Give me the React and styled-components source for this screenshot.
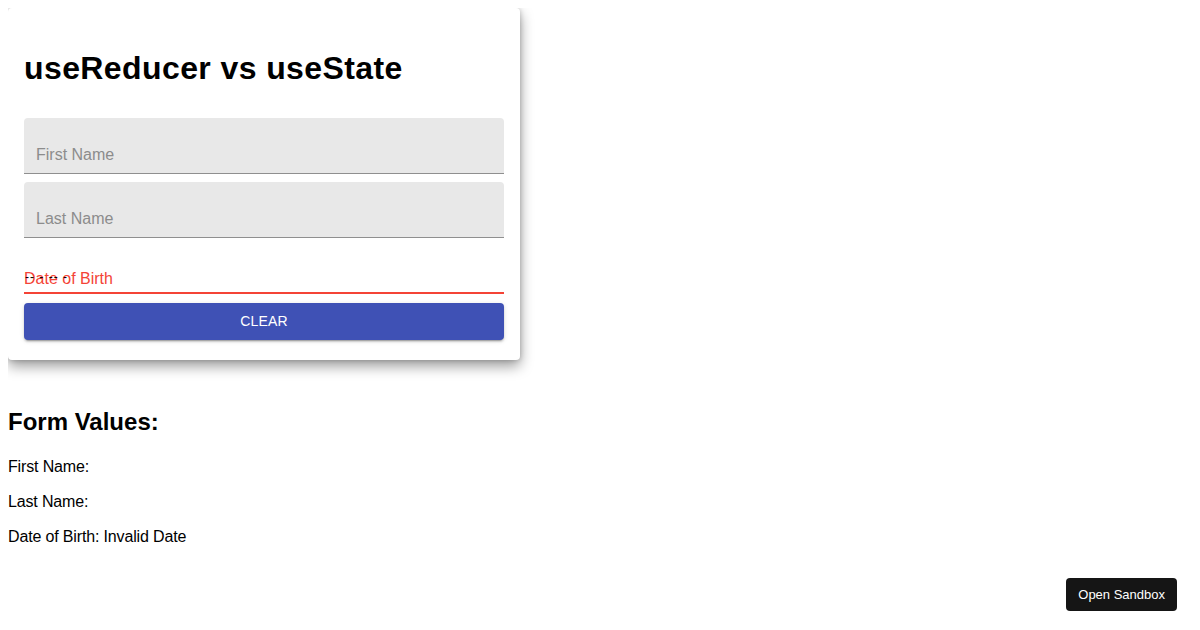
import React from "react";
import styled, { createGlobalStyle } from "styled-components";

const Global = createGlobalStyle`
  body {
    margin: 8px;
    font-family: "Liberation Sans", Arial, sans-serif;
    background: #fff;
    color: #000;
  }
`;

const Card = styled.div`
  width: 512px;
  box-sizing: border-box;
  padding: 16px 16px 20px;
  background: #fff;
  border-radius: 4px;
  box-shadow: 0 6px 14px rgba(0, 0, 0, 0.4), 0 0 5px rgba(0, 0, 0, 0.2);
  margin-bottom: 48px;
`;

const Title = styled.h1`
  font-size: 32px;
  font-weight: bold;
  letter-spacing: 0.4px;
  margin: 26px 0 31px;
`;

const Fields = styled.div`
  display: flex;
  flex-direction: column;
  gap: 8px;
`;

const FilledField = styled.div`
  height: 56px;
  box-sizing: border-box;
  background: #e8e8e8;
  border-radius: 4px 4px 0 0;
  border-bottom: 1px solid #8f8f8f;
  padding: 27px 12px 0;
  font-size: 16px;
  line-height: 19px;
  color: #8c8c8c;
`;

const DateField = styled.div`
  position: relative;
  height: 48px;
  box-sizing: border-box;
  padding-top: 23px;
  border-bottom: 2px solid #f44336;
  font-size: 16px;
  line-height: 19px;
  color: #f44336;
`;

const DatePlaceholder = styled.span`
  position: absolute;
  left: 1px;
  top: 22px;
  font-size: 12px;
  letter-spacing: 1px;
  color: #000;
`;

const ClearButton = styled.button`
  width: 100%;
  margin-top: 1px;
  border: none;
  border-radius: 4px;
  background: #3f51b5;
  color: #fff;
  font-family: "Liberation Sans", Arial, sans-serif;
  font-size: 14px;
  line-height: 25px;
  padding: 6px 16px;
  text-transform: uppercase;
  letter-spacing: 0.2px;
  box-shadow: 0 3px 1px -2px rgba(0, 0, 0, 0.2), 0 2px 2px 0 rgba(0, 0, 0, 0.14),
    0 1px 5px 0 rgba(0, 0, 0, 0.12);
`;

const SubTitle = styled.h2`
  font-size: 24px;
  font-weight: bold;
  margin: 0 0 21px;
`;

const Value = styled.p`
  font-size: 16px;
  line-height: 19px;
  letter-spacing: -0.15px;
  margin: 0 0 16px;
`;

const SandboxButton = styled.div`
  position: fixed;
  right: 23px;
  bottom: 19px;
  background: #151515;
  color: #fff;
  border-radius: 4px;
  font-size: 13px;
  line-height: 17px;
  padding: 8px 12px;
`;

export default function App() {
  return (
    <>
      <Global />
      <Card>
        <Title>useReducer vs useState</Title>
        <Fields>
          <FilledField>First Name</FilledField>
          <FilledField>Last Name</FilledField>
          <DateField>
            Date of Birth
            <DatePlaceholder>-- - -- -</DatePlaceholder>
          </DateField>
          <ClearButton>Clear</ClearButton>
        </Fields>
      </Card>
      <SubTitle>Form Values:</SubTitle>
      <Value>First Name:</Value>
      <Value>Last Name:</Value>
      <Value>Date of Birth: Invalid Date</Value>
      <SandboxButton>Open Sandbox</SandboxButton>
    </>
  );
}
